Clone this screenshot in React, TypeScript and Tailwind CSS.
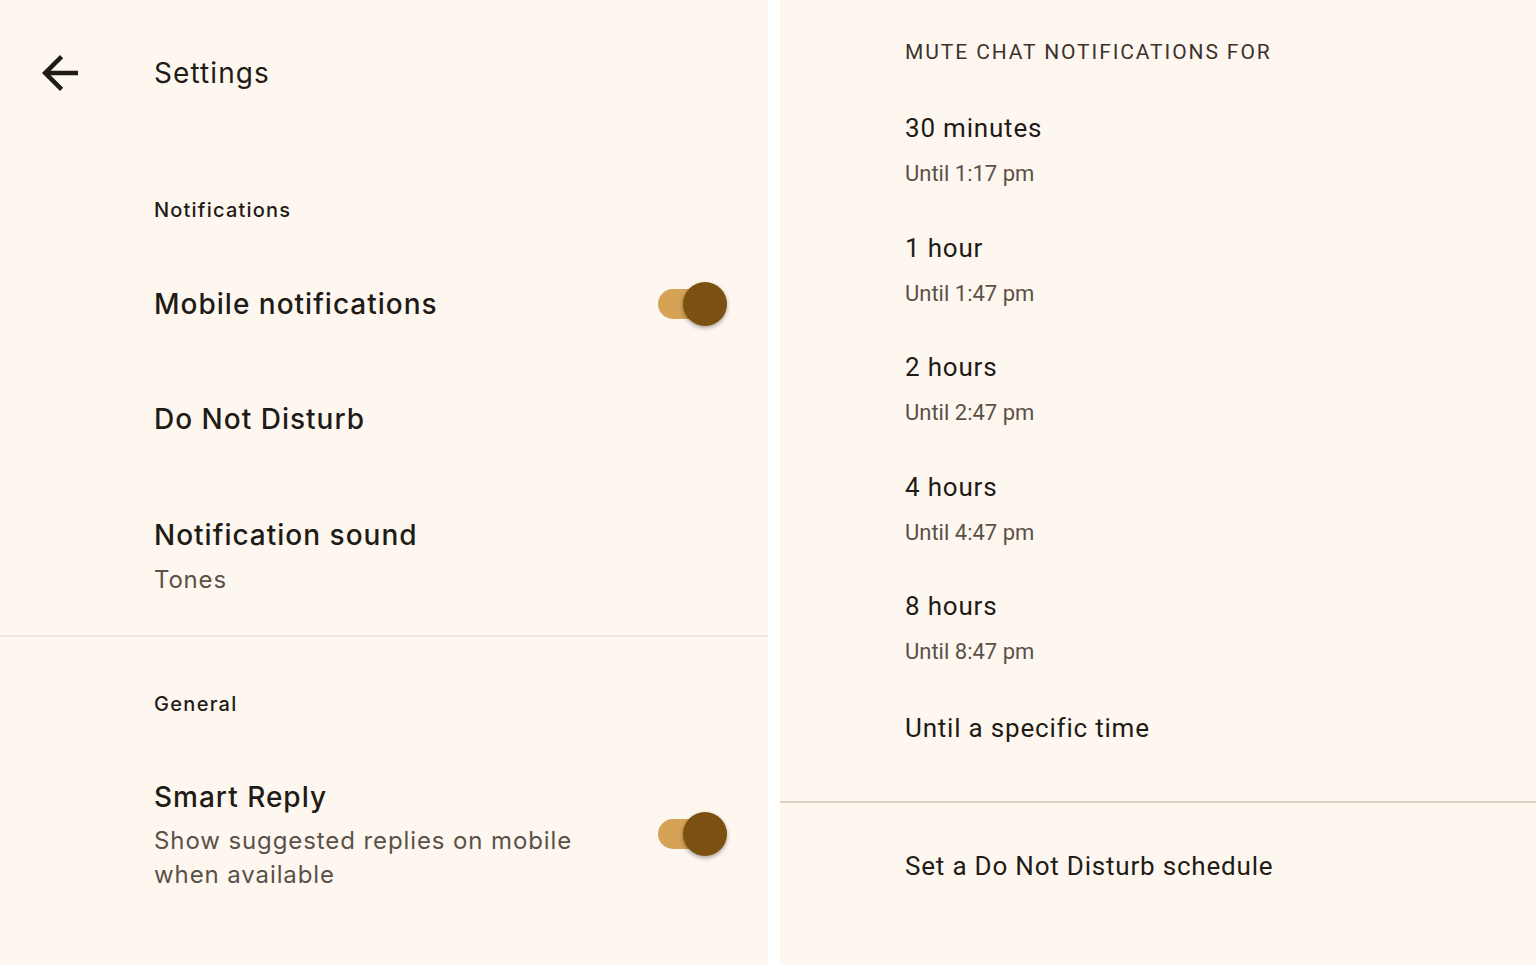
export default function App() {
  const mutes = [
    { label: "30 minutes", until: "Until 1:17 pm" },
    { label: "1 hour", until: "Until 1:47 pm" },
    { label: "2 hours", until: "Until 2:47 pm" },
    { label: "4 hours", until: "Until 4:47 pm" },
    { label: "8 hours", until: "Until 8:47 pm" },
  ];

  return (
    <div className="flex h-[965px] w-[1536px] overflow-hidden bg-white">
      {/* left: settings */}
      <div className="flex w-[768px] flex-col bg-[#fef7f0] font-['Inter',sans-serif] text-[#1f1b16]">
        <div className="flex h-[146px] items-center">
          <svg className="ml-[33px] h-[54px] w-[54px]" viewBox="0 0 24 24" fill="#1f1b16">
            <path d="M20 11H7.83l5.59-5.59L12 4l-8 8 8 8 1.41-1.41L7.83 13H20v-2z" />
          </svg>
          <span className="ml-[67px] text-[28px] leading-9 tracking-[1.1px]">Settings</span>
        </div>

        <div className="pl-[154px] pt-[50px] text-[20px] font-medium leading-7 tracking-[1.2px]">Notifications</div>

        <div className="mt-[22px] flex h-[115px] items-center justify-between pl-[154px] pr-[41px]">
          <span className="text-[28px] font-medium leading-9 tracking-[1px]">Mobile notifications</span>
          <Toggle />
        </div>
        <div className="flex h-[116px] items-center pl-[154px]">
          <span className="text-[28px] font-medium leading-9 tracking-[1px]">Do Not Disturb</span>
        </div>
        <div className="pl-[154px] pt-10 pb-[39px]">
          <div className="text-[28px] font-medium leading-9 tracking-[1px]">Notification sound</div>
          <div className="mt-[11px] text-[24px] leading-8 tracking-[0.8px] text-[#5a5147]">Tones</div>
        </div>

        <div className="h-[2px] bg-[#ebe7e3]" />

        <div className="pl-[154px] pt-[53px] text-[20px] font-medium leading-7 tracking-[1.3px]">General</div>

        <div className="mt-[61px] flex items-center justify-between pl-[154px] pr-[41px]">
          <div>
            <div className="text-[28px] font-medium leading-9 tracking-[1px]">Smart Reply</div>
            <div className="mt-[9px] text-[24px] leading-[34px] tracking-[0.9px] text-[#5a5147]">
              Show suggested replies on mobile
              <br />
              when available
            </div>
          </div>
          <div className="-mt-[3px]">
            <Toggle />
          </div>
        </div>
      </div>

      <div className="w-3 bg-white" />

      {/* right: mute options */}
      <div className="flex flex-1 flex-col bg-[#fef7f0] font-['Roboto',sans-serif] text-[#1f1b16]">
        <div className="pl-[125px] pt-[38px] text-[21px] uppercase leading-7 tracking-[1.9px] text-[#3a342d]">
          Mute chat notifications for
        </div>
        <div className="mt-[30px] pl-[125px]">
          {mutes.map((m) => (
            <div key={m.label} className="h-[119.5px] pt-4">
              <div className="text-[26px] leading-8 tracking-[0.8px]">{m.label}</div>
              <div className="mt-[16px] text-[22px] leading-7 text-[#5a5147]">{m.until}</div>
            </div>
          ))}
          <div className="h-[107.5px] pt-[18.5px] text-[26px] leading-8 tracking-[0.8px]">Until a specific time</div>
        </div>
        <div className="h-[2px] bg-[#dcd1c5]" />
        <div className="pl-[125px] pt-[47px] text-[26px] leading-8 tracking-[0.8px]">Set a Do Not Disturb schedule</div>
      </div>
    </div>
  );
}

function Toggle() {
  return (
    <div className="relative h-[44px] w-[69px] shrink-0">
      <div className="absolute left-0 top-[7px] h-[30px] w-[62px] rounded-full bg-[#d6a256]" />
      <div className="absolute right-0 top-0 h-[44px] w-[44px] rounded-full bg-[#7b5011] shadow-[0_2px_4px_rgba(0,0,0,0.35)]" />
    </div>
  );
}
